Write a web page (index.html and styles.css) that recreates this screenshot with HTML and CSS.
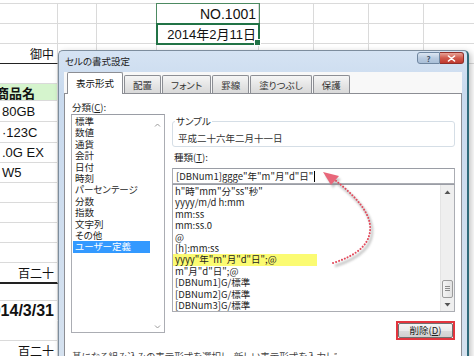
FILE: index.html
```html
<!DOCTYPE html>
<html lang="ja">
<head>
    <meta charset="UTF-8">
    <title>セルの書式設定</title>
    <link rel="stylesheet" href="styles.css">
</head>
<body>
<div class="screen">
    <!-- 背景のワークシート -->
    <div class="sheet">
        <div class="row">
            <div class="cell"></div><div class="cell"></div><div class="cell"></div>
            <div class="cell no">NO.1001</div>
            <div class="cell"></div><div class="cell"></div><div class="cell"></div><div class="cell"></div>
        </div>
        <div class="row">
            <div class="cell"></div><div class="cell"></div><div class="cell"></div>
            <div class="cell sel">2014年2月11日</div>
            <div class="cell"></div><div class="cell"></div><div class="cell"></div><div class="cell"></div>
        </div>
        <div class="row">
            <div class="cell jp underline">御中</div><div class="cell"></div><div class="cell"></div>
            <div class="cell"></div>
            <div class="cell"></div><div class="cell"></div><div class="cell"></div><div class="cell"></div>
        </div>
        <div class="row"><div class="cell"></div></div>
        <div class="row short"><div class="cell head"><span>商品名</span></div></div>
        <div class="row tall"><div class="cell left">80GB</div></div>
        <div class="row tall"><div class="cell left">·123C</div></div>
        <div class="row"><div class="cell left">.0G EX</div></div>
        <div class="row"><div class="cell left">W5</div></div>
        <div class="row"><div class="cell"></div></div>
        <div class="row"><div class="cell"></div></div>
        <div class="row"><div class="cell"></div></div>
        <div class="row"><div class="cell"></div></div>
        <div class="row"><div class="cell jp thick">百二十</div></div>
        <div class="row short"><div class="cell"></div></div>
        <div class="row"><div class="cell date noline">2014/3/31</div></div>
        <div class="row"><div class="cell"></div></div>
        <div class="row"><div class="cell jp">百二十</div></div>
    </div>

    <!-- セルの書式設定ダイアログ -->
    <div class="dialog">
        <div class="titlebar">
            <span class="title">セルの書式設定</span>
            <span class="cap-btn help">?</span>
            <span class="cap-btn close">
                <svg width="9" height="7" viewBox="0 0 9 7"><path d="M1.5 1 L7.5 6 M7.5 1 L1.5 6" stroke="#fff" stroke-width="1.6" stroke-linecap="round"/></svg>
            </span>
        </div>
        <div class="client">
            <div class="tabs">
                <span class="tab active">表示形式</span>
                <span class="tab">配置</span>
                <span class="tab">フォント</span>
                <span class="tab">罫線</span>
                <span class="tab">塗りつぶし</span>
                <span class="tab">保護</span>
            </div>
            <div class="panel">
                <div class="col-left">
                    <div class="label">分類(<u>C</u>):</div>
                    <div class="listbox cat-list">
                        <ul class="items">
                            <li>標準</li>
                            <li>数値</li>
                            <li>通貨</li>
                            <li>会計</li>
                            <li>日付</li>
                            <li>時刻</li>
                            <li>パーセンテージ</li>
                            <li>分数</li>
                            <li>指数</li>
                            <li>文字列</li>
                            <li>その他</li>
                            <li class="selected">ユーザー定義</li>
                        </ul>
                        <div class="vscroll plain">
                            <svg width="7" height="4" viewBox="0 0 7 4"><path d="M1 3.5 L3.5 1 L6 3.5" fill="none" stroke="#9a9a9a" stroke-width="1"/></svg>
                            <svg width="7" height="4" viewBox="0 0 7 4"><path d="M1 0.5 L3.5 3 L6 0.5" fill="none" stroke="#9a9a9a" stroke-width="1"/></svg>
                        </div>
                    </div>
                </div>
                <div class="col-right">
                    <fieldset class="sample">
                        <legend>サンプル</legend>
                        <div class="sample-text">平成二十六年二月十一日</div>
                    </fieldset>
                    <div class="label kind">種類(<u>T</u>):</div>
                    <div class="format-input">[DBNum1]ggge"年"m"月"d"日"<span class="caret"></span></div>
                    <div class="listbox fmt-list">
                        <ul class="items">
                            <li>h"時"mm"分"ss"秒"</li>
                            <li>yyyy/m/d h:mm</li>
                            <li>mm:ss</li>
                            <li>mm:ss.0</li>
                            <li>@</li>
                            <li>[h]:mm:ss</li>
                            <li class="marked">yyyy"年"m"月"d"日";@</li>
                            <li>m"月"d"日";@</li>
                            <li>[DBNum1]G/標準</li>
                            <li>[DBNum2]G/標準</li>
                            <li>[DBNum3]G/標準</li>
                        </ul>
                        <div class="vscroll">
                            <span class="arrow-btn"><svg width="7" height="4" viewBox="0 0 7 4"><path d="M0.5 4 L3.5 0.5 L6.5 4 Z" fill="#555"/></svg></span>
                            <span class="track"></span>
                            <span class="thumb"><svg width="5" height="6" viewBox="0 0 5 6"><path d="M0 0.5 H5 M0 2.5 H5 M0 4.5 H5" stroke="#8a8a8a" stroke-width="1"/></svg></span>
                            <span class="arrow-btn"><svg width="7" height="4" viewBox="0 0 7 4"><path d="M0.5 0 L3.5 3.5 L6.5 0 Z" fill="#555"/></svg></span>
                        </div>
                    </div>
                    <div class="btn-row">
                        <span class="mark"><button class="btn">削除(<u>D</u>)</button></span>
                    </div>
                </div>
                <p class="hint">基になる組み込みの表示形式を選択し、新しい表示形式を入力してください。</p>
            </div>
        </div>
    </div>

    <!-- 赤い点線の矢印 -->
    <svg class="callout" width="474" height="363" viewBox="0 0 474 363">
        <defs>
            <filter id="soft" x="-20%" y="-20%" width="140%" height="140%"><feGaussianBlur stdDeviation="1.3"/></filter>
        </defs>
        <g filter="url(#soft)" opacity="0.45">
            <path d="M335,266 C357,259 374,248 372,228 C370,211 352,195 337,183" fill="none" stroke="#888" stroke-width="2.5"/>
            <polygon points="325,175 341,179 333,188" fill="#888"/>
        </g>
        <path d="M333,263 C355,256 372,245 370,225 C368,208 350,192 335,180" fill="none" stroke="#e24a5c" stroke-width="2" stroke-dasharray="0.1 3" stroke-linecap="round"/>
        <polygon points="323,172 339,176 331,185" fill="#e8677a"/>
    </svg>
</div>
</body>
</html>
```

FILE: styles.css
```css
* { box-sizing: border-box; }

body {
    margin: 0;
    background: #fff;
    font-family: "Noto Sans CJK JP", sans-serif;
    font-feature-settings: "palt" 1;
    color: #1e1e1e;
}

.screen {
    position: relative;
    width: 474px;
    height: 356px;
    overflow: hidden;
    background: #fff;
}

/* ワークシート */
.sheet {
    margin-top: 3px;
    border-top: 1px solid #dadada;
    font-family: "Liberation Sans", "Noto Sans CJK JP", sans-serif;
    font-size: 13px;
    color: #111;
}

.row {
    display: grid;
    grid-template-columns: 58px 39px 60px 102px 55px 55px 55px 55px;
}

.cell {
    height: 20px;
    border-right: 1px solid #dadada;
    border-bottom: 1px solid #dadada;
    display: flex;
    align-items: center;
    justify-content: flex-end;
    padding-right: 2px;
    overflow: hidden;
    white-space: nowrap;
}

.row.short .cell { height: 17px; }
.row.tall .cell { height: 21px; }

.cell.no {
    font-size: 14px;
    outline: 1px solid #4d8a62;
}

.cell.sel {
    position: relative;
    overflow: visible;
    outline: 2px solid #217346;
    outline-offset: -1px;
}

.cell.sel::after {
    content: "";
    position: absolute;
    right: -3px;
    bottom: -3px;
    width: 5px;
    height: 5px;
    background: #217346;
    border: 1px solid #fff;
}

.cell.jp { font-size: 12px; padding-right: 3px; }
.cell.underline { border-bottom: 1px solid #222; }
.cell.thick { height: 21px; border-bottom: 2px solid #222; }

.cell.head {
    justify-content: flex-start;
    background: #d5f4cd;
    font-weight: bold;
    font-size: 13px;
}
.cell.head span { margin-left: -4px; }

.cell.left { justify-content: flex-start; padding-left: 2px; }

.cell.date {
    font-size: 16px;
    font-weight: bold;
    padding-right: 3px;
}
.cell.noline { border-bottom-color: transparent; }

/* ダイアログ */
.dialog {
    position: absolute;
    left: 58px;
    top: 50px;
    width: 411px;
    height: 330px;
    display: flex;
    flex-direction: column;
    padding: 0 5px;
    border: 1px solid #7d8d9d;
    border-right: 2px solid #2f6a7a;
    border-radius: 5px 5px 0 0;
    background: linear-gradient(#d5e3f3, #c9daee 40px, #d6e2ef);
    box-shadow: 2px 2px 6px rgba(0,0,0,0.25);
    font-size: 9.5px;
    color: #1e1e1e;
}

.titlebar {
    height: 21px;
    display: flex;
    align-items: flex-start;
}

.title {
    flex: 1;
    padding: 3px 0 0 1px;
    font-size: 9.5px;
    color: #222;
}

.cap-btn {
    margin-top: 1px;
    height: 12px;
    display: flex;
    align-items: center;
    justify-content: center;
    border: 1px solid #6f86a0;
}

.help {
    width: 23px;
    border-radius: 3px 0 0 3px;
    background: linear-gradient(#dce6f2, #b9cbe0 50%, #a9bfd8);
    color: #44546a;
    font-weight: bold;
    font-size: 8px;
}

.close {
    width: 24px;
    margin-right: -2px;
    border-color: #8f2f2a;
    border-left: none;
    border-radius: 0 3px 3px 0;
    background: linear-gradient(#e8a296, #d05a4c 50%, #c0392f);
}

.client {
    flex: 1;
    background: #f8f8f8;
    display: flex;
    flex-direction: column;
}

.tabs {
    height: 21px;
    display: flex;
    align-items: flex-end;
    padding-left: 3px;
}

.tab {
    height: 18px;
    padding: 0 8px;
    display: flex;
    align-items: center;
    border: 1px solid #8c8e94;
    border-bottom: none;
    margin-right: 1px;
    background: linear-gradient(#f5f5f5, #e6e6e6 50%, #d9d9d9);
    border-radius: 2px 2px 0 0;
    color: #333;
}

.tab.active {
    position: relative;
    height: 22px;
    margin-bottom: -1px;
    padding-bottom: 2px;
    background: #fff;
    color: #111;
}

.panel {
    flex: 1;
    background: #fff;
    border: 1px solid #8c8e94;
    padding: 7px 5px 0 6px;
    display: grid;
    grid-template-columns: 94px 283px;
    grid-template-rows: auto 1fr;
    column-gap: 7px;
}

.label {
    height: 12px;
    line-height: 12px;
    padding-left: 1px;
}

.listbox {
    border: 1px solid #abadb3;
    border-top-color: #9a9da5;
    display: flex;
    background: #fff;
}

.items {
    list-style: none;
    margin: 0;
    padding: 1px 0 0;
}

.items li {
    height: 11.4px;
    line-height: 11.4px;
    white-space: nowrap;
}

.cat-list {
    margin-top: 1px;
    height: 219px;
}

.cat-list .items { width: 78px; }
.cat-list li { padding-left: 3px; }
.cat-list li.selected {
    margin-left: 1px;
    padding-left: 2px;
    background: #3399ff;
    color: #fff;
}

.vscroll.plain {
    flex: 1;
    display: flex;
    flex-direction: column;
    justify-content: space-between;
    align-items: center;
    padding: 8px 0 3px;
}

.col-right { margin-top: 14px; }

.sample {
    margin: 0;
    padding: 5px 5px 2px;
    border: 1px solid #d5dee6;
    border-radius: 3px;
    min-width: 0;
}

.sample legend {
    margin-left: -3px;
    padding: 0 1px;
    line-height: 12px;
}

.sample-text {
    height: 12px;
    line-height: 12px;
    color: #333;
}

.label.kind {
    margin-top: 4px;
    padding-left: 2px;
}

.format-input {
    margin-top: 5px;
    height: 16px;
    line-height: 14px;
    padding-left: 3px;
    border: 1px solid #abadb3;
    border-top-color: #9a9da5;
    white-space: nowrap;
}

.caret {
    display: inline-block;
    width: 1px;
    height: 11px;
    margin-left: 1px;
    vertical-align: -2px;
    background: #000;
}

.fmt-list { height: 128px; }
.fmt-list .items { flex: 1; }
.fmt-list li { padding-left: 2px; }
.fmt-list li.marked {
    width: 144px;
    background: #fbfb72;
}

.fmt-list .vscroll {
    width: 14px;
    display: flex;
    flex-direction: column;
    background: #efefef;
    border-left: 1px solid #e4e4e4;
}

.arrow-btn {
    height: 14px;
    display: flex;
    align-items: center;
    justify-content: center;
}
.arrow-btn:last-child { height: 13px; }

.track { flex: 1; }

.thumb {
    height: 18px;
    margin: 0 1px;
    display: flex;
    align-items: center;
    justify-content: center;
    border: 1px solid #9c9c9c;
    border-radius: 2px;
    background: linear-gradient(90deg, #f4f4f4, #e2e2e2);
}

.btn-row {
    margin-top: 9px;
    display: flex;
    justify-content: flex-end;
}

.mark {
    display: block;
    border: 2px solid #e2353e;
}

.btn {
    display: block;
    width: 55px;
    height: 15px;
    padding: 0;
    border: 1px solid #707070;
    border-radius: 2px;
    background: linear-gradient(#f4f4f4, #ebebeb 50%, #dcdcdc 50%, #d0d0d0);
    font-family: "Noto Sans CJK JP", sans-serif;
    font-feature-settings: "palt" 1;
    font-size: 9.5px;
    line-height: 13px;
    color: #222;
}

.hint {
    grid-column: 1 / -1;
    margin: 10px 0 0 1px;
    width: 265px;
    line-height: 12px;
    white-space: nowrap;
    overflow: hidden;
    color: #444;
}

/* 矢印 */
.callout {
    position: absolute;
    left: 0;
    top: 0;
    pointer-events: none;
}
```
